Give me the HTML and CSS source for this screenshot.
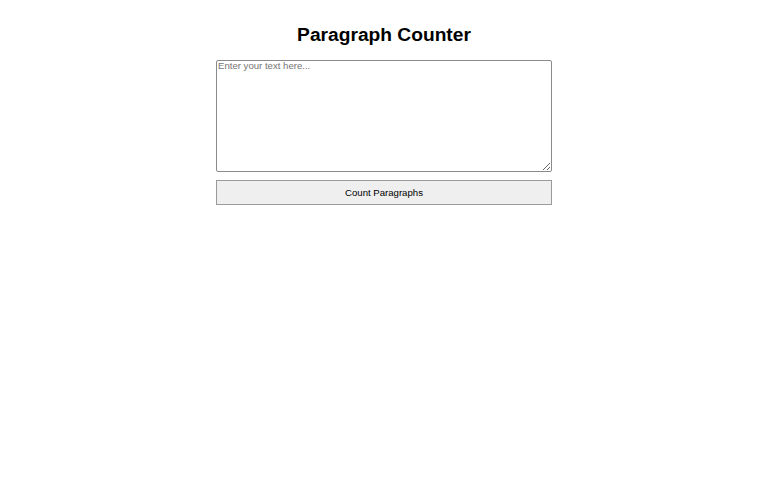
FILE: index.html
```html
<!DOCTYPE html>
<html lang="en">
<head>
<meta charset="utf-8">
<title>Paragraph Counter</title>
<link rel="stylesheet" href="styles.css">
</head>
<body>
  <main class="counter">
    <h1 class="counter-title">Paragraph Counter</h1>
    <textarea class="counter-input" placeholder="Enter your text here..."></textarea>
    <button class="counter-button" type="button">Count Paragraphs</button>
  </main>
</body>
</html>
```

FILE: styles.css
```css
html, body {
  margin: 0;
  background: #ffffff;
}

body {
  font-family: "Liberation Sans", Arial, sans-serif;
  color: #000000;
}

.counter {
  width: 336px;
  margin: 0 auto;
  display: flex;
  flex-direction: column;
}

.counter-title {
  margin: 24px 0 14px;
  font-size: 19.2px;
  line-height: 22px;
  font-weight: bold;
  text-align: center;
}

.counter-input {
  box-sizing: border-box;
  width: 100%;
  height: 112px;
  margin: 0;
  padding: 0 1px;
  border: 1px solid #8a8a8a;
  border-radius: 2px;
  font-family: "Liberation Sans", Arial, sans-serif;
  font-size: 9.6px;
  line-height: 10px;
  color: #000000;
  background: #ffffff;
}

.counter-input::placeholder {
  color: #757575;
}

.counter-button {
  box-sizing: border-box;
  width: 100%;
  height: 25px;
  margin: 8px 0 0;
  padding: 0;
  border: 1px solid #9a9a9a;
  border-radius: 0;
  background: #efefef;
  font-family: "Liberation Sans", Arial, sans-serif;
  font-size: 9.6px;
  color: #000000;
}
```
